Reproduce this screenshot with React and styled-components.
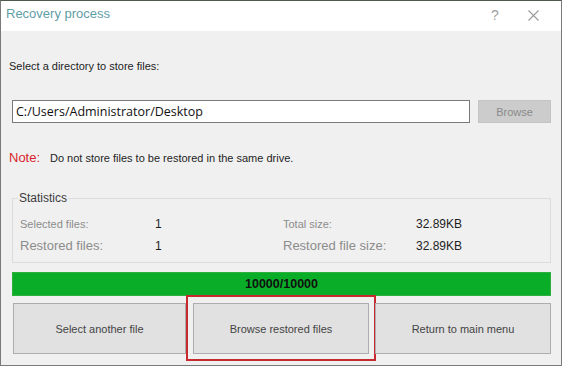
import React from "react";
import styled, { createGlobalStyle } from "styled-components";

const GlobalStyle = createGlobalStyle`
  html, body {
    margin: 0;
    padding: 0;
    background: #6b6f6a;
  }
  * {
    box-sizing: border-box;
  }
`;

const Window = styled.div`
  width: 562px;
  height: 366px;
  display: flex;
  flex-direction: column;
  background: #f0f0f0;
  border: 1px solid #7a7a7a;
  border-top-color: #4d5a4a;
  font-family: "Liberation Sans", Arial, sans-serif;
  overflow: hidden;
`;

const TitleBar = styled.div`
  height: 30px;
  flex: none;
  background: #ffffff;
  display: flex;
  align-items: center;
  padding: 0 0 0 5px;
`;

const Title = styled.div`
  flex: 1;
  font-size: 13px;
  color: #5f9ea6;
  margin-top: -6px;
`;

const TitleButton = styled.div`
  width: ${(p) => p.$w}px;
  display: flex;
  justify-content: center;
  align-items: center;
  color: #a0a0a0;
  font-size: 14px;
  margin-top: -2px;
`;

const Body = styled.div`
  flex: 1;
  display: flex;
  flex-direction: column;
  padding: 0 10px 0 11px;
`;

const Label = styled.div`
  font-size: 11px;
  color: #1e1e1e;
  margin: 29px 0 0 -3px;
`;

const PathRow = styled.div`
  display: flex;
  gap: 8px;
  margin-top: 28px;
  height: 23px;
`;

const PathInput = styled.div`
  flex: 1;
  border: 1px solid #7a7a7a;
  background: #ffffff;
  font-family: "Open Sans", "Noto Sans", sans-serif;
  font-size: 12.5px;
  color: #111;
  display: flex;
  align-items: center;
  padding-left: 3px;
`;

const BrowseButton = styled.div`
  width: 73px;
  background: #cccccc;
  border: 1px solid #c4c4c4;
  color: #8a8a8a;
  font-size: 11px;
  display: flex;
  align-items: center;
  justify-content: center;
`;

const NoteRow = styled.div`
  display: flex;
  align-items: baseline;
  margin: 27px 0 0 -3px;
`;

const NoteTag = styled.span`
  color: #d8262e;
  font-size: 13px;
  width: 41px;
`;

const NoteText = styled.span`
  color: #1e1e1e;
  font-size: 11px;
`;

const Group = styled.fieldset`
  margin: 26px 0 0 0;
  padding: 10px 0 8px 7px;
  border: 1px solid #dcdcdc;
  min-inline-size: 0;
`;

const Legend = styled.legend`
  font-size: 12px;
  color: #3c3c3c;
  padding: 0 1px;
  margin-left: -2px;
`;

const StatGrid = styled.div`
  display: grid;
  grid-template-columns: 135px 128px 133px 1fr;
  row-gap: 5px;
  align-items: center;
`;

const StatLabel = styled.div`
  color: #8c8c8c;
  font-size: ${(p) => (p.$big ? 13 : 11)}px;
  height: 17px;
  display: flex;
  align-items: center;
`;

const StatValue = styled.div`
  color: #1e1e1e;
  font-size: 12px;
  height: 17px;
  display: flex;
  align-items: center;
`;

const Progress = styled.div`
  margin-top: 9px;
  height: 24px;
  background: #0aad28;
  border: 1px solid #2faf3f;
  display: flex;
  align-items: center;
  justify-content: center;
  font-weight: bold;
  font-size: 12.5px;
  color: #111;
`;

const ButtonRow = styled.div`
  display: flex;
  margin-top: 7px;
  gap: 6px;
  padding-left: 1px;
`;

const Highlight = styled.div`
  display: flex;
  padding: 6px 5px 5px 5px;
  margin: -8px -7px 0 -6px;
  border: 2px solid ${(p) => (p.$on ? "#c62a30" : "transparent")};
`;

const ActionButton = styled.div`
  width: ${(p) => p.$w}px;
  height: 51px;
  background: #e1e1e1;
  border: 1px solid #adadad;
  display: flex;
  align-items: center;
  justify-content: center;
  font-size: 11px;
  color: #444;
`;

export default function App() {
  return (
    <>
      <GlobalStyle />
      <Window>
        <TitleBar>
          <Title>Recovery process</Title>
          <TitleButton $w={20}>?</TitleButton>
          <TitleButton $w={56}>
            <svg width="11" height="11" viewBox="0 0 11 11">
              <path d="M0.5 0.5 L10.5 10.5 M10.5 0.5 L0.5 10.5" stroke="#9a9a9a" strokeWidth="1.1" />
            </svg>
          </TitleButton>
        </TitleBar>
        <Body>
          <Label>Select a directory to store files:</Label>
          <PathRow>
            <PathInput>C:/Users/Administrator/Desktop</PathInput>
            <BrowseButton>Browse</BrowseButton>
          </PathRow>
          <NoteRow>
            <NoteTag>Note:</NoteTag>
            <NoteText>Do not store files to be restored in the same drive.</NoteText>
          </NoteRow>
          <Group>
            <Legend>Statistics</Legend>
            <StatGrid>
              <StatLabel>Selected files:</StatLabel>
              <StatValue>1</StatValue>
              <StatLabel>Total size:</StatLabel>
              <StatValue>32.89KB</StatValue>
              <StatLabel $big>Restored files:</StatLabel>
              <StatValue>1</StatValue>
              <StatLabel $big>Restored file size:</StatLabel>
              <StatValue>32.89KB</StatValue>
            </StatGrid>
          </Group>
          <Progress>10000/10000</Progress>
          <ButtonRow>
            <ActionButton $w={174}>Select another file</ActionButton>
            <Highlight $on>
              <ActionButton $w={176}>Browse restored files</ActionButton>
            </Highlight>
            <ActionButton $w={177}>Return to main menu</ActionButton>
          </ButtonRow>
        </Body>
      </Window>
    </>
  );
}
